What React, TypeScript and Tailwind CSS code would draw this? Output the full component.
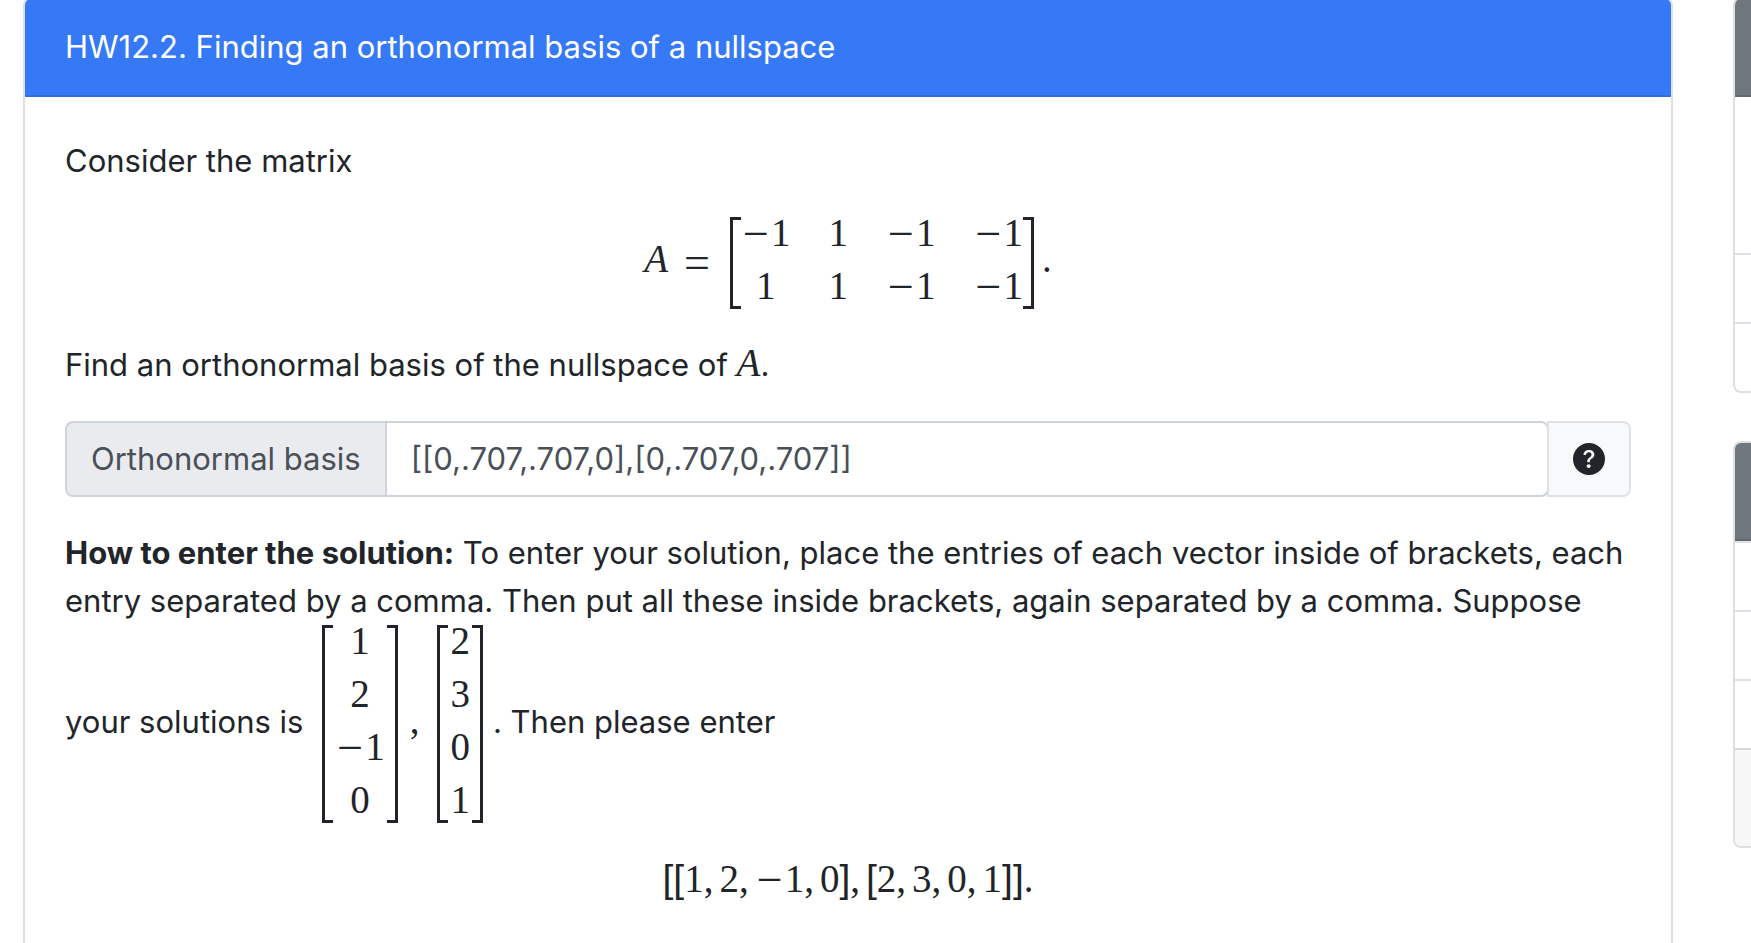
import type { ReactNode } from 'react'
import { BsQuestionCircleFill } from 'react-icons/bs'

function Minus() {
  return <span className="inline-block w-[30px] text-center align-[-3px] text-[46px] leading-[0]">−</span>
}

function Num({ value }: { value: number }) {
  return (
    <span className="whitespace-nowrap">
      {value < 0 && <Minus />}
      {Math.abs(value)}
    </span>
  )
}

function Bracketed({ children }: { children: ReactNode }) {
  return (
    <span className="inline-flex items-stretch align-middle">
      <span className="w-[11px] border-[3px] border-r-0 border-[#212529]" />
      {children}
      <span className="w-[11px] border-[3px] border-l-0 border-[#212529]" />
    </span>
  )
}

function ColumnVector({ values }: { values: number[] }) {
  return (
    <Bracketed>
      <span className="grid h-[198px] auto-rows-[39px] content-center justify-items-center gap-y-[14px] px-0.5 pb-2 leading-[39px]">
        {values.map((v, i) => (
          <Num key={i} value={v} />
        ))}
      </span>
    </Bracketed>
  )
}

function Op({ children }: { children: string }) {
  return <span className="font-['Liberation_Sans',sans-serif]">{children}</span>
}

function VectorList({ values }: { values: number[] }) {
  return (
    <>
      <Op>[</Op>
      {values.map((v, i) => (
        <span key={i}>
          <Num value={v} />
          {i < values.length - 1 && <span className="mr-1.5">,</span>}
        </span>
      ))}
      <Op>]</Op>
    </>
  )
}

const matrix = [
  [-1, 1, -1, -1],
  [1, 1, -1, -1],
]

export default function App() {
  return (
    <div className="flex min-h-screen overflow-hidden bg-white pl-[23px] font-[Inter,sans-serif] text-[31px] leading-[48px] text-[#212529]">
      <main className="-mt-[3px] min-w-0 flex-1 rounded-t-lg border-2 border-b-0 border-[#dfdfdf]">
        <h1 className="rounded-t-md border-b-2 border-[#306dde] bg-[#3579f6] px-10 py-6 text-white">
          HW12.2. Finding an orthonormal basis of a nullspace
        </h1>

        <div className="flex flex-col gap-8 p-10 pb-0">
          <p>Consider the matrix</p>

          <div className="flex items-center justify-center font-['Liberation_Serif',serif] text-[39px]">
            <i className="pb-2">A</i>
            <span className="mr-5 ml-4 text-[46px]">=</span>
            <Bracketed>
              <span className="grid h-[92px] auto-rows-[39px] grid-cols-[repeat(4,auto)] content-center justify-items-center gap-x-[38px] gap-y-[14px] pb-2 leading-[39px]">
                {matrix.flat().map((v, i) => (
                  <Num key={i} value={v} />
                ))}
              </span>
            </Bracketed>
            <span className="ml-2 pb-2">.</span>
          </div>

          <p>
            Find an orthonormal basis of the nullspace of{' '}
            <i className="font-['Liberation_Serif',serif] text-[39px] leading-none">A</i>.
          </p>

          <div className="flex h-[76px] text-[#495057]">
            <label
              htmlFor="basis"
              className="flex items-center rounded-l-lg border-2 border-r-0 border-[#ced4da] bg-[#eaebef] px-6"
            >
              Orthonormal basis
            </label>
            <input
              id="basis"
              type="text"
              defaultValue="[[0,.707,.707,0],[0,.707,0,.707]]"
              className="min-w-0 flex-1 rounded-r-lg border-2 border-[#ced4da] bg-white px-6 outline-none"
            />
            <button
              type="button"
              aria-label="Help"
              className="-ml-0.5 flex w-[84px] items-center justify-center rounded-r-lg border-2 border-[#dee2e6] bg-[#f8f9fa] text-[#212529]"
            >
              <BsQuestionCircleFill size={32} />
            </button>
          </div>

          <p>
            <strong className="font-bold">How to enter the solution:</strong> To enter your solution, place the
            entries of each vector inside of brackets, each entry separated by a comma. Then put all these inside
            brackets, again separated by a comma. Suppose your solutions is{' '}
            <span className="mx-2.5 font-['Liberation_Serif',serif] text-[39px] leading-none">
              <ColumnVector values={[1, 2, -1, 0]} />
              <span className="mr-[18px] ml-3">,</span>
              <ColumnVector values={[2, 3, 0, 1]} />
            </span>
            . Then please enter
          </p>

          <p className="text-center font-['Liberation_Serif',serif] text-[39px]">
            <Op>[</Op>
            <VectorList values={[1, 2, -1, 0]} />
            <span className="mr-1.5">,</span>
            <VectorList values={[2, 3, 0, 1]} />
            <Op>]</Op>.
          </p>
        </div>
      </main>

      <aside className="-mt-[3px] ml-[60px] flex w-[18px] flex-col gap-12">
        <section className="rounded-l-lg border-2 border-r-0 border-[#dfdfdf]">
          <div className="h-[98px] rounded-tl-md border-b-2 border-[#62686f] bg-[#6f767d]" />
          <div className="h-[158px] border-b-2 border-[#dee2e6]" />
          <div className="h-[69px] border-b-2 border-[#dee2e6]" />
          <div className="h-[67px]" />
        </section>
        <section className="rounded-l-lg border-2 border-r-0 border-[#dfdfdf]">
          <div className="h-[98px] rounded-tl-md border-b-2 border-[#62686f] bg-[#6f767d]" />
          <div className="h-[71px] border-y-2 border-[#dee2e6]" />
          <div className="h-[69px] border-b-2 border-[#dee2e6]" />
          <div className="h-[69px] border-b-2 border-[#d8d8d8]" />
          <div className="h-24 rounded-bl-md bg-[#f7f7f7]" />
        </section>
      </aside>
    </div>
  )
}
